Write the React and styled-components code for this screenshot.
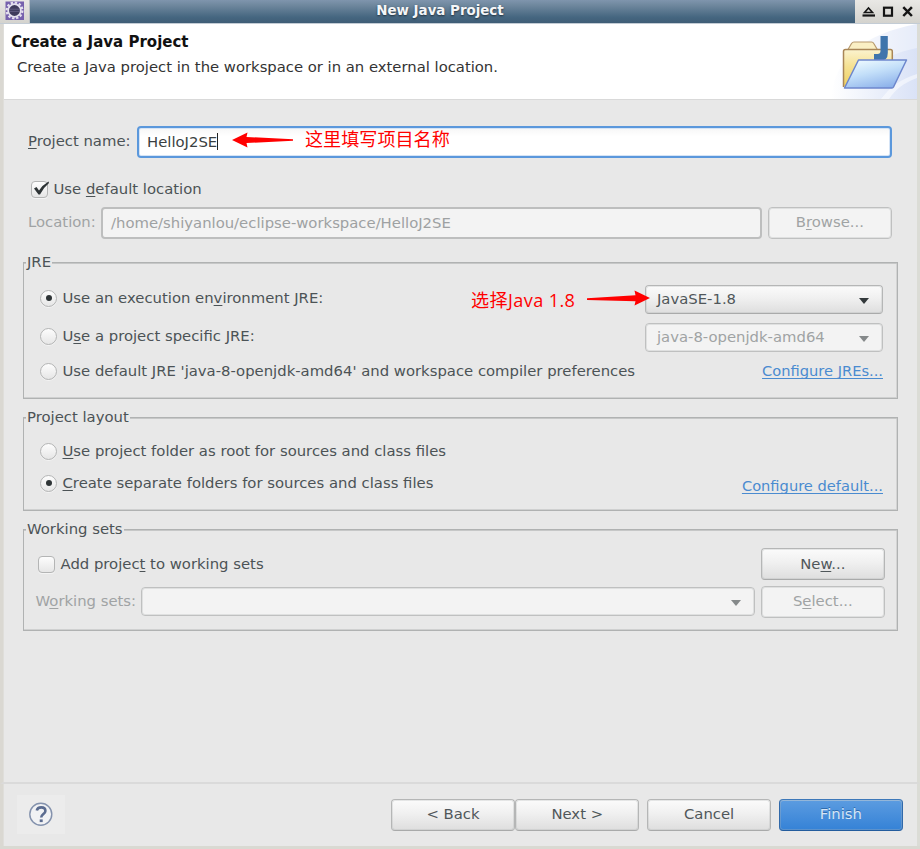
import React from 'react';
import styled, { createGlobalStyle, css } from 'styled-components';

const Global = createGlobalStyle`
  * { box-sizing: border-box; }
  html, body { margin: 0; padding: 0; }
  body { font-family: 'DejaVu Sans', sans-serif; font-size: 14.84px; color: #4c5356; overflow: hidden; }
`;

const Dialog = styled.div`
  position: relative;
  display: grid;
  grid-template-rows: 24px 75px 685px 1fr;
  width: 920px;
  height: 849px;
  background: #e8e8e8;
  border-bottom: 3px solid #d9d9d2;
  overflow: hidden;
`;

const TitleBar = styled.header`
  display: grid;
  grid-template-columns: 30px 1fr 65px;
  height: 24px;
  border-bottom: 1px solid #c3ccd5;
  background: linear-gradient(#7f95ad, #6d869c 25%, #456680 75%, #3f5d76);
`;

const TitleText = styled.h1`
  margin: 0;
  padding-right: 5px;
  text-align: center;
  font-size: 13.4px;
  line-height: 22px;
  font-weight: bold;
  color: #f4f6f8;
  text-shadow: 0 1px 2px rgba(20, 30, 40, 0.8);
`;

const Corner = styled.div`
  display: flex;
  align-items: center;
  height: 23px;
  background: linear-gradient(#e9e8e5, #d4d3ce);
`;

const Framed = styled.div`
  border-left: 3px solid #dad8d2;
  border-right: 3px solid #dbdcd6;
  box-shadow: inset 1px 0 #dfdeda;
`;

const Banner = styled(Framed)`
  display: flex;
  justify-content: space-between;
  background: #fff;
  border-bottom: 0;
`;

const BannerCopy = styled.div`
  padding: 8px 0 0 8px;
  h2 { margin: 0; font-size: 15px; line-height: 20px; color: #111; white-space: nowrap; }
  p { margin: 5px 0 0 6px; line-height: 20px; font-size: 14.8px; color: #333; white-space: nowrap; }
`;

const Main = styled(Framed)`
  display: flex;
  flex-direction: column;
  padding: 27px 19px 0 20px;
  border-bottom: 2px solid #dadada;
  background: linear-gradient(#d9d9d9, #d9d9d9) top / 100% 1px no-repeat;
`;

const Label = styled.label`
  white-space: nowrap;
  line-height: 20px;
  padding-bottom: ${(p) => (p.$w ? 2 : 0)}px;
  width: ${(p) => (p.$w ? p.$w + 'px' : 'auto')};
  color: ${(p) => (p.$muted ? '#a0a3a4' : 'inherit')};
`;

const Key = styled.span`
  text-decoration: underline 1px;
  text-underline-offset: 2px;
  text-decoration-skip-ink: none;
`;

const Field = styled.div`
  display: flex;
  align-items: center;
  flex: 1;
  height: 32px;
  padding: 0 8px 2px;
  border: 2px solid #bdbebe;
  border-radius: 4px;
  background: #f3f3f3;
  color: #9ea1a2;
  ${(p) =>
    p.$focused &&
    css`
      border-color: #5b98dc;
      background: linear-gradient(#f6f6f6, #fff 30%);
      box-shadow: inset 0 0 0 1px #d5e4f6;
      color: #3a3f41;
    `}
`;

const Caret = styled.i`
  width: 1px;
  height: 17px;
  background: #222;
`;

const tones = {
  normal: css`
    border-color: #b5b6b6 #b5b6b6 #a9aaaa;
    background: linear-gradient(#fbfbfb, #f0f0f0 45%, #dedede);
    color: #50575a;
  `,
  disabled: css`
    border-color: #bfc0c0;
    background: #f3f3f3;
    color: #a0a3a4;
  `,
  primary: css`
    border-color: #3d78b9 #3069aa #235c9d;
    background: linear-gradient(#5c9ce0, #4a90dc 45%, #3582d6);
    box-shadow: inset 0 1px #86b6e8;
    color: #d6e5f5;
    text-shadow: 0 -1px #2f6cae;
  `,
};

const Button = styled.button`
  flex: none;
  width: 124.3px;
  height: 32px;
  margin-left: ${(p) => (p.$push ? 'auto' : (p.$gap || 0) + 'px')};
  padding: 0 0 ${(p) => (p.$low ? 0 : 2)}px;
  border: 1px solid;
  border-radius: 4px;
  outline: 1px solid rgba(180, 181, 181, 0.3);
  outline-offset: -2px;
  font: inherit;
  line-height: 20px;
  ${(p) => tones[p.$tone || 'normal']}
`;

const Combo = styled.div`
  display: flex;
  align-items: center;
  justify-content: space-between;
  height: 29px;
  width: ${(p) => (p.$grow ? 'auto' : '238px')};
  flex: ${(p) => (p.$grow ? '1' : 'none')};
  margin-left: auto;
  margin-top: ${(p) => (p.$grow ? -1 : 0)}px;
  padding: 0 13px 3px 11px;
  border: 1px solid;
  border-radius: 4px;
  outline: 1px solid rgba(180, 181, 181, 0.3);
  outline-offset: -2px;
  ${(p) => tones[p.$tone || 'normal']}
`;

const Arrow = styled.i`
  width: 0;
  margin-top: 5px;
  border: 5px solid transparent;
  border-bottom: 0;
  border-top: 6px solid ${(p) => (p.$muted ? '#85898a' : '#33393b')};
`;

const Check = styled.span`
  display: flex;
  flex: none;
  width: 17px;
  height: 17px;
  margin-right: 6px;
  border: 1.5px solid #b4b5b5;
  border-radius: 4px;
  background: linear-gradient(#fdfdfd, #e6e6e6);
  box-shadow: 0 1px #f4f4f4;
  svg { flex: none; width: 19px; height: 16px; margin: -1px 0 0 -1px; overflow: visible; }
`;

const Radio = styled.span`
  display: grid;
  place-items: center;
  flex: none;
  width: 17px;
  height: 17px;
  margin-right: 5.5px;
  border: 1.5px solid #b4b5b5;
  border-radius: 50%;
  background: linear-gradient(#fdfdfd, #e6e6e6);
  box-shadow: 0 1px #f4f4f4;
  &::after {
    content: '';
    width: 6px;
    height: 6px;
    border-radius: 50%;
    background: ${(p) => (p.$on ? '#2e3436' : 'transparent')};
  }
`;

const Row = styled.div`
  display: flex;
  align-items: center;
  flex: none;
  height: ${(p) => p.$h}px;
  margin-top: ${(p) => p.$mt || 0}px;
  padding-left: ${(p) => p.$pl || 0}px;
  padding-right: ${(p) => p.$pr || 0}px;
  > ${Label}, > ${Radio} {
    margin-top: -${(p) => p.$lift || 0}px;
  }
`;

const Group = styled.section`
  flex: none;
  height: ${(p) => p.$h}px;
  margin-top: ${(p) => p.$mt}px;
  border: 1px solid #b0b2b2;
  box-shadow: inset 0 1px #c6c7c7, inset 0 -1px #cfd0d0, inset -1px 0 #d4d4d4;
`;

const Legend = styled.h3`
  width: fit-content;
  height: 18px;
  margin: -10px 0 0 2px;
  padding: 0 1px;
  background: #e8e8e8;
  font-size: inherit;
  font-weight: normal;
  line-height: 18px;
`;

const Link = styled.a`
  margin-left: auto;
  margin-top: ${(p) => p.$drop || 0}px;
  font-size: 14.65px;
  line-height: 20px;
  color: #4a8bd0;
  text-decoration: underline 1px;
  text-underline-offset: 2px;
  text-decoration-skip-ink: none;
`;

const Footer = styled(Framed)`
  display: flex;
  align-items: flex-start;
  padding: 11px 14px 0 14px;
`;

const Help = styled.div`
  display: grid;
  place-items: center;
  width: 48px;
  height: 39px;
  margin-right: auto;
  background: #ececec;
`;

const Actions = styled.div`
  display: flex;
  padding-top: 4px;
`;

const Note = styled.div`
  position: absolute;
  left: ${(p) => p.$x}px;
  top: ${(p) => p.$y}px;
  display: flex;
  align-items: center;
  height: 24px;
  color: #f00;
  font-family: 'Open Sans', 'Noto Sans CJK SC', sans-serif;
  font-size: 18.1px;
  line-height: 24px;
  white-space: nowrap;
  letter-spacing: ${(p) => p.$ls || 0}px;
  svg { flex: none; }
`;

const EclipseIcon = () => (
  <svg width="30" height="23" viewBox="0 0 30 23">
    <rect x="5.5" y="1.5" width="18.5" height="18.5" fill="#7661ad" />
    <circle cx="14.5" cy="10.5" r="7.9" fill="none" stroke="#e4e0ee" strokeWidth="2.2" strokeDasharray="2.4 1.736" />
    <circle cx="14.5" cy="10.5" r="6.3" fill="#3f3b5c" stroke="#e4e0ee" strokeWidth="1.8" />
    <path d="M9 9.2h11M9 11.4h11" stroke="#656184" strokeWidth="0.9" />
    <path d="M29.5 0v23" stroke="#b9c0c6" />
  </svg>
);

const WindowIcons = () => (
  <svg width="65" height="23" viewBox="0 0 65 23" fill="none" stroke="#151515">
    <path d="M9.5 12.5l4-4.500 4 4.500z" strokeWidth="1.6" />
    <path d="M7.5 15.5h12.5" strokeWidth="2.2" />
    <rect x="29" y="7.7" width="8" height="8" strokeWidth="2.2" />
    <path d="M48.3 7.2l8.6 8.8M56.9 7.2l-8.6 8.8" strokeWidth="2.5" />
  </svg>
);

const FolderArt = () => (
  <svg width="86" height="75" viewBox="0 0 86 75">
    <defs>
      <linearGradient id="glow" x1="0" x2="1"><stop stopColor="#fff" /><stop offset="1" stopColor="#d3ddf5" /></linearGradient>
      <linearGradient id="back" x1="0" y1="0" x2="0" y2="1"><stop stopColor="#fbf3cf" /><stop offset=".45" stopColor="#f5e193" /><stop offset="1" stopColor="#eed061" /></linearGradient>
      <linearGradient id="front" x1=".2" y1="0" x2=".7" y2="1"><stop stopColor="#eefaff" /><stop offset=".45" stopColor="#c3dff9" /><stop offset="1" stopColor="#8bb0ea" /></linearGradient>
    </defs>
    <path d="M0 75C3 34 33 10 86 0V75Z" fill="url(#glow)" opacity=".85" />
    <path d="M30 20C48 8 62 3 86 0V24C66 28 46 36 30 52Z" fill="#fff" opacity=".35" />
    <path d="M50 75C60 62 70 55 86 50V54C72 59 64 66 58 75Z" fill="#fff" opacity=".5" />
    <g transform="translate(1 0)">
      <path d="M16 25.5l3.500-6q1-1.500 2.500-1.500h17.500q1.500 0 2.300 1.500l3.500 6" fill="#faefc4" stroke="#b89a6e" strokeWidth="1.2" />
      <path d="M11.500 63V27.500q0-2 2-2h45q1.800 0 1.800 2V40" fill="url(#back)" stroke="#a98657" strokeWidth="1.500" />
      <path d="M48.500 12h7.300V29q0 8-8 8H42v-7h3.500q3 0 3-3z" fill="#3f75ac" />
      <path d="M26.500 36h48L61.500 63q-.5 1-1.500 1H12.500Z" fill="url(#front)" stroke="#6d87cd" strokeWidth="1.500" strokeLinejoin="round" />
    </g>
  </svg>
);

const HelpIcon = () => (
  <svg width="26" height="26" viewBox="0 0 26 26" fill="none">
    <circle cx="12.800" cy="12.300" r="11" fill="#f1f2f4" stroke="#8492ad" strokeWidth="1.400" />
    <path d="M8.800 8.600C9.200 6.500 11 5.400 13.200 5.400C15.700 5.400 17.400 6.800 17.400 8.900C17.400 12 13.200 12 13.200 15.500" stroke="#5b6c90" strokeWidth="2.600" />
    <rect x="11.700" y="17.400" width="3" height="2.700" fill="#5b6c90" />
  </svg>
);

const LeftArrow = () => (
  <svg width="62" height="18" viewBox="0 0 62 18" fill="#f00">
    <path d="M0 9L15.500 1.500L14.500 6L61 8.300V9.700L14.500 12L15.500 16.500Z" />
  </svg>
);

const RightArrow = () => (
  <svg width="63" height="18" viewBox="0 0 63 18" fill="#f00">
    <path d="M63 9L47.500 1.500L48.500 6.300L0 9.300V10.900L48.500 12.300L47.500 16.500Z" />
  </svg>
);

export default function App() {
  return (
    <Dialog>
      <Global />
      <TitleBar>
        <Corner><EclipseIcon /></Corner>
        <TitleText>New Java Project</TitleText>
        <Corner><WindowIcons /></Corner>
      </TitleBar>

      <Banner>
        <BannerCopy>
          <h2>Create a Java Project</h2>
          <p>Create a Java project in the workspace or in an external location.</p>
        </BannerCopy>
        <FolderArt />
      </Banner>

      <Main>
        <Row $h={32} $pl={5} $pr={6}>
          <Label $w={109}><Key>P</Key>roject name:</Label>
          <Field $focused>HelloJ2SE<Caret /></Field>
        </Row>
        <Row $h={20} $mt={21} $pl={7.5}>
          <Check>
            <svg viewBox="0 0 19 16"><path d="M3 7.500L5.500 6L8 9.500Q11.500 4 17.500 .5L18 2Q12.500 6.500 9 13.500H7.500Z" fill="#2e3436" /></svg>
          </Check>
          <Label>Use <Key>d</Key>efault location</Label>
        </Row>
        <Row $h={32} $mt={8} $pl={5} $pr={6}>
          <Label $w={73} $muted>Location:</Label>
          <Field>/home/shiyanlou/eclipse-workspace/HelloJ2SE</Field>
          <Button $tone="disabled" $gap={5.5}>B<Key>r</Key>owse...</Button>
        </Row>

        <Group $h={137} $mt={23}>
          <Legend>JRE</Legend>
          <Row $h={29} $mt={14} $pl={16} $pr={14} $lift={3}>
            <Radio $on /><Label>Use an execution en<Key>v</Key>ironment JRE:</Label>
            <Combo>JavaSE-1.8<Arrow /></Combo>
          </Row>
          <Row $h={29} $mt={9} $pl={16} $pr={14} $lift={3}>
            <Radio /><Label>U<Key>s</Key>e a project specific JRE:</Label>
            <Combo $tone="disabled">java-8-openjdk-amd64<Arrow $muted /></Combo>
          </Row>
          <Row $h={20} $mt={9} $pl={16} $pr={14}>
            <Radio /><Label>Use default JRE 'java-8-openjdk-amd64' and workspace compiler preferences</Label>
            <Link>Configure JREs...</Link>
          </Row>
        </Group>

        <Group $h={94} $mt={18}>
          <Legend>Project layout</Legend>
          <Row $h={20} $mt={15} $pl={16}>
            <Radio /><Label><Key>U</Key>se project folder as root for sources and class files</Label>
          </Row>
          <Row $h={20} $mt={12} $pl={16} $pr={14}>
            <Radio $on /><Label><Key>C</Key>reate separate folders for sources and class files</Label>
            <Link $drop={6}>Configure default...</Link>
          </Row>
        </Group>

        <Group $h={102} $mt={18}>
          <Legend>Working sets</Legend>
          <Row $h={32} $mt={10} $pl={13.5} $pr={12}>
            <Check /><Label>Add projec<Key>t</Key> to working sets</Label>
            <Button $push $low>Ne<Key>w</Key>...</Button>
          </Row>
          <Row $h={32} $mt={6} $pl={11.5} $pr={12}>
            <Label $w={105.5} $muted>W<Key>o</Key>rking sets:</Label>
            <Combo $grow $tone="disabled"><span /><Arrow $muted /></Combo>
            <Button $tone="disabled" $gap={6}>S<Key>e</Key>lect...</Button>
          </Row>
        </Group>
      </Main>

      <Footer>
        <Help><HelpIcon /></Help>
        <Actions>
          <Button>&lt; Back</Button>
          <Button>Next &gt;</Button>
          <Button $gap={7.5}>Cancel</Button>
          <Button $gap={7.5} $tone="primary">Finish</Button>
        </Actions>
      </Footer>

      <Note $x={232} $y={128}><LeftArrow /></Note>
      <Note $x={305} $y={127}>这里填写项目名称</Note>
      <Note $x={471} $y={288} $ls={0.4}>选择Java 1.8</Note>
      <Note $x={587} $y={286}><RightArrow /></Note>
    </Dialog>
  );
}
